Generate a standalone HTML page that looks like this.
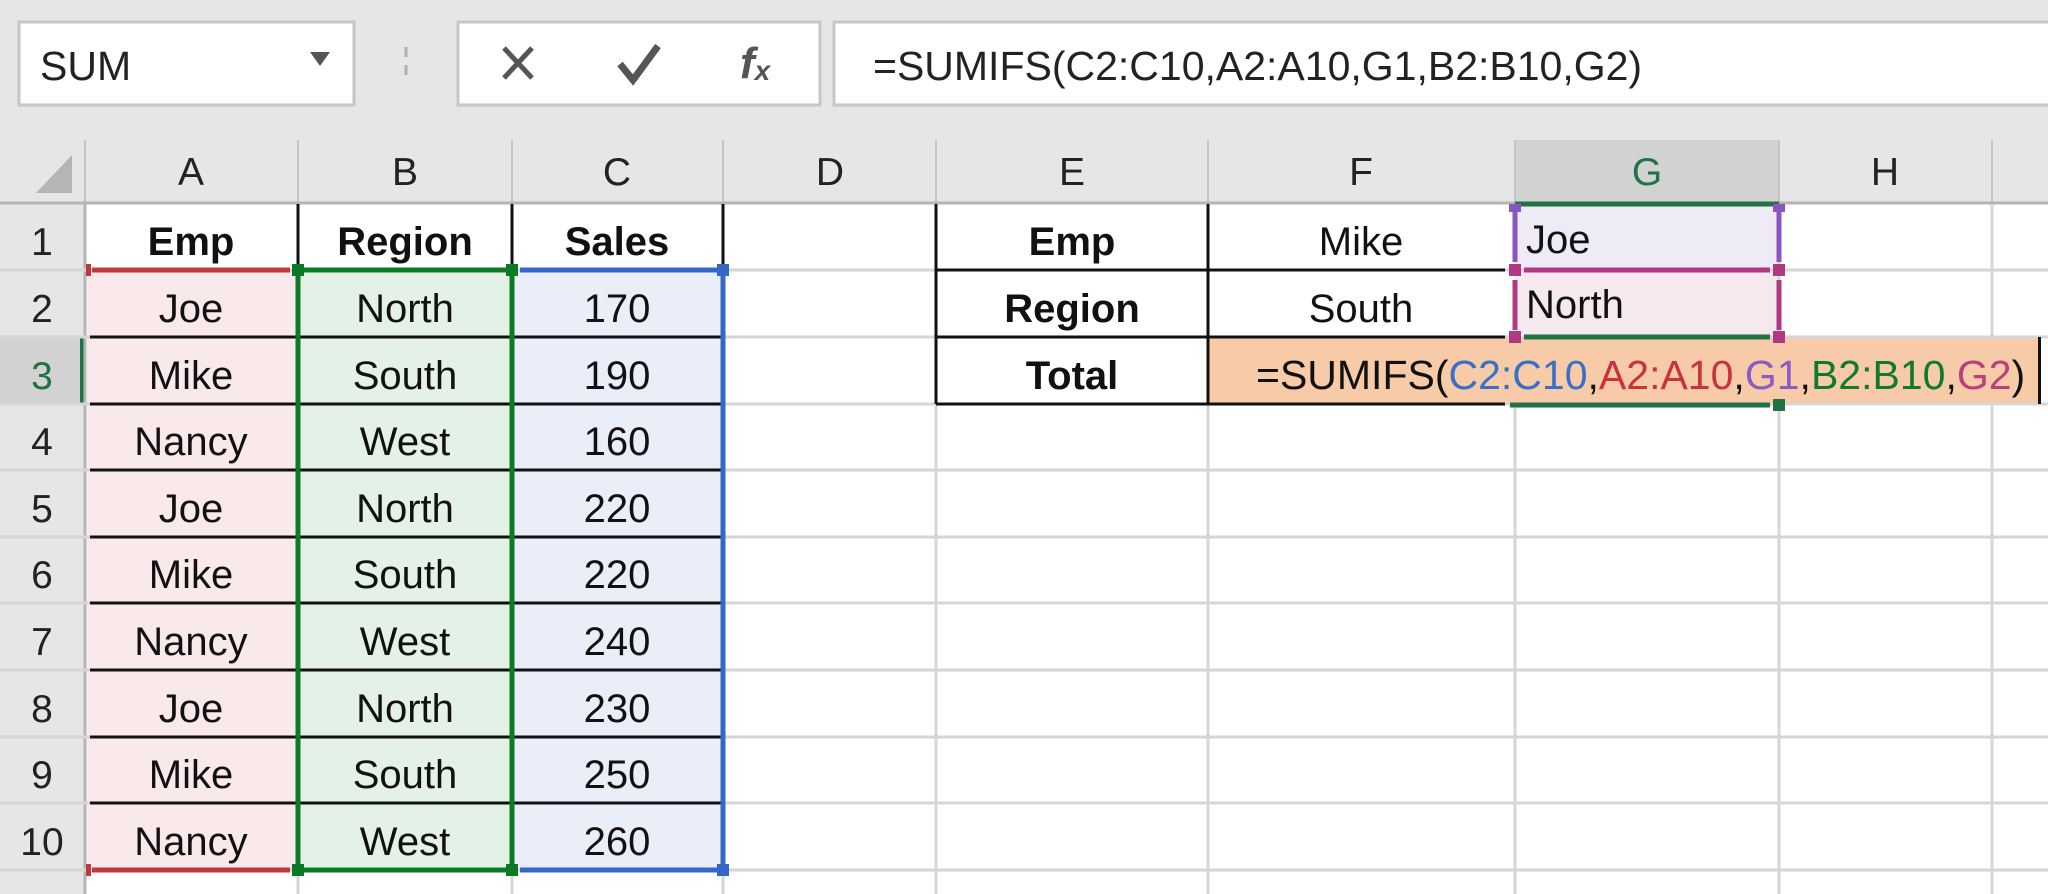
<!DOCTYPE html>
<html><head><meta charset="utf-8"><style>
html,body{margin:0;padding:0;background:#fff;}
svg{display:block;}
text{font-family:"Liberation Sans",sans-serif;}
</style></head><body>
<svg width="2048" height="894" viewBox="0 0 2048 894" xmlns="http://www.w3.org/2000/svg">
<rect x="0" y="0" width="2048" height="204" fill="#e6e6e6"/>
<rect x="19" y="22" width="335" height="83" fill="#fff" stroke="#c6c6c6" stroke-width="3"/>
<text x="40" y="80" font-size="41" fill="#222">SUM</text>
<path d="M310 52 L330 52 L320 66 Z" fill="#555"/>
<line x1="406" y1="47" x2="406" y2="57" stroke="#b0b0b0" stroke-width="3"/>
<line x1="406" y1="65" x2="406" y2="75" stroke="#b0b0b0" stroke-width="3"/>
<rect x="458" y="22" width="362" height="83" fill="#fff" stroke="#c6c6c6" stroke-width="3"/>
<path d="M504 48 L532 78 M532 48 L504 78" stroke="#555" stroke-width="5"/>
<path d="M620 64 L633 80 L658 46" stroke="#555" stroke-width="7" fill="none"/>
<text x="740" y="78" font-size="44" font-style="italic" font-family="Liberation Serif" font-weight="bold" fill="#555">f<tspan font-size="28" dy="2">x</tspan></text>
<rect x="834" y="22" width="1230" height="83" fill="#fff" stroke="#c6c6c6" stroke-width="3"/>
<text x="873" y="80" font-size="41" fill="#222">=SUMIFS(C2:C10,A2:A10,G1,B2:B10,G2)</text>

<rect x="0" y="204" width="85" height="690" fill="#e6e6e6"/>
<rect x="0" y="337" width="85" height="67" fill="#d2d2d2"/>
<rect x="80" y="337" width="4" height="67" fill="#217346"/>
<rect x="1515" y="140" width="264" height="64" fill="#d2d2d2"/>
<path d="M36 193 L72 193 L72 155 Z" fill="#b5b5b5"/>
<g stroke="#c4c4c4" stroke-width="2">
<line x1="85" y1="140" x2="85" y2="204"/><line x1="298" y1="140" x2="298" y2="204"/>
<line x1="512" y1="140" x2="512" y2="204"/><line x1="723" y1="140" x2="723" y2="204"/>
<line x1="936" y1="140" x2="936" y2="204"/><line x1="1208" y1="140" x2="1208" y2="204"/>
<line x1="1515" y1="140" x2="1515" y2="204"/><line x1="1779" y1="140" x2="1779" y2="204"/>
<line x1="1992" y1="140" x2="1992" y2="204"/>
</g>
<line x1="0" y1="203" x2="2048" y2="203" stroke="#b4b4b4" stroke-width="3"/>
<line x1="85" y1="204" x2="85" y2="894" stroke="#b4b4b4" stroke-width="3"/>

<rect x="87" y="270" width="211" height="600" fill="#f9e9ea"/>
<rect x="298" y="270" width="214" height="600" fill="#e4f1e6"/>
<rect x="512" y="270" width="211" height="600" fill="#e9eef8"/>
<rect x="1515" y="204" width="264" height="66" fill="#efebf6"/>
<rect x="1515" y="270" width="264" height="67" fill="#f5e9ef"/>
<rect x="1208" y="337" width="832" height="67" fill="#f8cba8"/>

<g stroke="#d6d6d6" stroke-width="3">
<line x1="0" y1="270" x2="2048" y2="270"/><line x1="0" y1="337" x2="2048" y2="337"/>
<line x1="0" y1="404" x2="2048" y2="404"/><line x1="0" y1="470" x2="2048" y2="470"/>
<line x1="0" y1="537" x2="2048" y2="537"/><line x1="0" y1="603" x2="2048" y2="603"/>
<line x1="0" y1="670" x2="2048" y2="670"/><line x1="0" y1="737" x2="2048" y2="737"/>
<line x1="0" y1="803" x2="2048" y2="803"/><line x1="0" y1="870" x2="2048" y2="870"/>
<line x1="298" y1="204" x2="298" y2="894"/><line x1="512" y1="204" x2="512" y2="894"/>
<line x1="723" y1="204" x2="723" y2="894"/><line x1="936" y1="204" x2="936" y2="894"/>
<line x1="1208" y1="404" x2="1208" y2="894"/><line x1="1515" y1="404" x2="1515" y2="894"/>
<line x1="1779" y1="204" x2="1779" y2="894"/><line x1="1992" y1="204" x2="1992" y2="894"/>
</g>
<rect x="1208" y="339" width="832" height="64" fill="#f8cba8"/>

<g stroke="#111" stroke-width="3">
<line x1="298" y1="204" x2="298" y2="270"/><line x1="512" y1="204" x2="512" y2="270"/><line x1="723" y1="204" x2="723" y2="270"/>
<line x1="90" y1="337" x2="723" y2="337"/><line x1="90" y1="404" x2="723" y2="404"/>
<line x1="90" y1="470" x2="723" y2="470"/><line x1="90" y1="537" x2="723" y2="537"/>
<line x1="90" y1="603" x2="723" y2="603"/><line x1="90" y1="670" x2="723" y2="670"/>
<line x1="90" y1="737" x2="723" y2="737"/><line x1="90" y1="803" x2="723" y2="803"/>
<line x1="936" y1="204" x2="936" y2="404"/><line x1="1208" y1="204" x2="1208" y2="404"/>
<line x1="936" y1="270" x2="1505" y2="270"/><line x1="936" y1="337" x2="1505" y2="337"/>
<line x1="936" y1="404" x2="1505" y2="404"/>
</g>

<g stroke-width="5" fill="none">
<path d="M92 270 L290 270 M92 870 L290 870" stroke="#c1373d"/>
<path d="M298 270 L512 270 L512 870 L298 870 Z" stroke="#0a7a24"/>
<path d="M520 270 L723 270 L723 870 L520 870" stroke="#3567c7"/>
<path d="M1515 212 L1515 262 M1779 212 L1779 262" stroke="#8b55bf"/>
<path d="M1524 270 L1770 270 M1515 280 L1515 330 M1779 280 L1779 330" stroke="#b03a82"/>
<path d="M1524 337 L1770 337 M1515 204 L1779 204 M1510 405 L1770 405" stroke="#217346"/>
</g>
<g>
<rect x="86" y="264" width="5" height="12" fill="#c1373d"/><rect x="86" y="864" width="5" height="12" fill="#c1373d"/>
<rect x="292" y="264" width="12" height="12" fill="#0a7a24"/><rect x="506" y="264" width="12" height="12" fill="#0a7a24"/>
<rect x="292" y="864" width="12" height="12" fill="#0a7a24"/><rect x="506" y="864" width="12" height="12" fill="#0a7a24"/>
<rect x="717" y="264" width="12" height="12" fill="#3567c7"/><rect x="717" y="864" width="12" height="12" fill="#3567c7"/>
<rect x="1509" y="204" width="12" height="8" fill="#8b55bf"/><rect x="1773" y="204" width="12" height="8" fill="#8b55bf"/>
<rect x="1509" y="264" width="12" height="12" fill="#b03a82"/><rect x="1773" y="264" width="12" height="12" fill="#b03a82"/>
<rect x="1509" y="331" width="12" height="12" fill="#b03a82"/><rect x="1773" y="331" width="12" height="12" fill="#b03a82"/>
<rect x="1773" y="399" width="12" height="12" fill="#217346"/>
<rect x="2038" y="337" width="3" height="67" fill="#111"/>
</g>

<g font-size="39" fill="#222" text-anchor="middle">
<text x="191" y="185">A</text><text x="405" y="185">B</text><text x="617" y="185">C</text>
<text x="830" y="185">D</text><text x="1072" y="185">E</text><text x="1361" y="185">F</text>
<text x="1647" y="185" fill="#217346">G</text><text x="1885" y="185">H</text>
</g>
<g font-size="39" fill="#222" text-anchor="middle">
<text x="42" y="255">1</text><text x="42" y="322">2</text><text x="42" y="389" fill="#217346">3</text>
<text x="42" y="455">4</text><text x="42" y="522">5</text><text x="42" y="588">6</text>
<text x="42" y="655">7</text><text x="42" y="722">8</text><text x="42" y="788">9</text>
<text x="42" y="855">10</text><text x="42" y="922">11</text>
</g>
<g font-size="40" fill="#111" text-anchor="middle">
<text x="191" y="255" font-weight="bold">Emp</text><text x="405" y="255" font-weight="bold">Region</text><text x="617" y="255" font-weight="bold">Sales</text>
<text x="191" y="322">Joe</text><text x="405" y="322">North</text><text x="617" y="322">170</text>
<text x="191" y="389">Mike</text><text x="405" y="389">South</text><text x="617" y="389">190</text>
<text x="191" y="455">Nancy</text><text x="405" y="455">West</text><text x="617" y="455">160</text>
<text x="191" y="522">Joe</text><text x="405" y="522">North</text><text x="617" y="522">220</text>
<text x="191" y="588">Mike</text><text x="405" y="588">South</text><text x="617" y="588">220</text>
<text x="191" y="655">Nancy</text><text x="405" y="655">West</text><text x="617" y="655">240</text>
<text x="191" y="722">Joe</text><text x="405" y="722">North</text><text x="617" y="722">230</text>
<text x="191" y="788">Mike</text><text x="405" y="788">South</text><text x="617" y="788">250</text>
<text x="191" y="855">Nancy</text><text x="405" y="855">West</text><text x="617" y="855">260</text>
<text x="1072" y="255" font-weight="bold">Emp</text><text x="1361" y="255">Mike</text>
<text x="1072" y="322" font-weight="bold">Region</text><text x="1361" y="322">South</text>
<text x="1072" y="389" font-weight="bold">Total</text>
</g>
<g font-size="40" fill="#111">
<text x="1526" y="253">Joe</text>
<text x="1526" y="318">North</text>
<text x="1256" y="389" font-size="41">=SUMIFS(<tspan fill="#3a6fc8">C2:C10</tspan>,<tspan fill="#c8323a">A2:A10</tspan>,<tspan fill="#8a5ac8">G1</tspan>,<tspan fill="#0f7a2a">B2:B10</tspan>,<tspan fill="#b8407f">G2</tspan>)</text>
</g>
</svg>
</body></html>
